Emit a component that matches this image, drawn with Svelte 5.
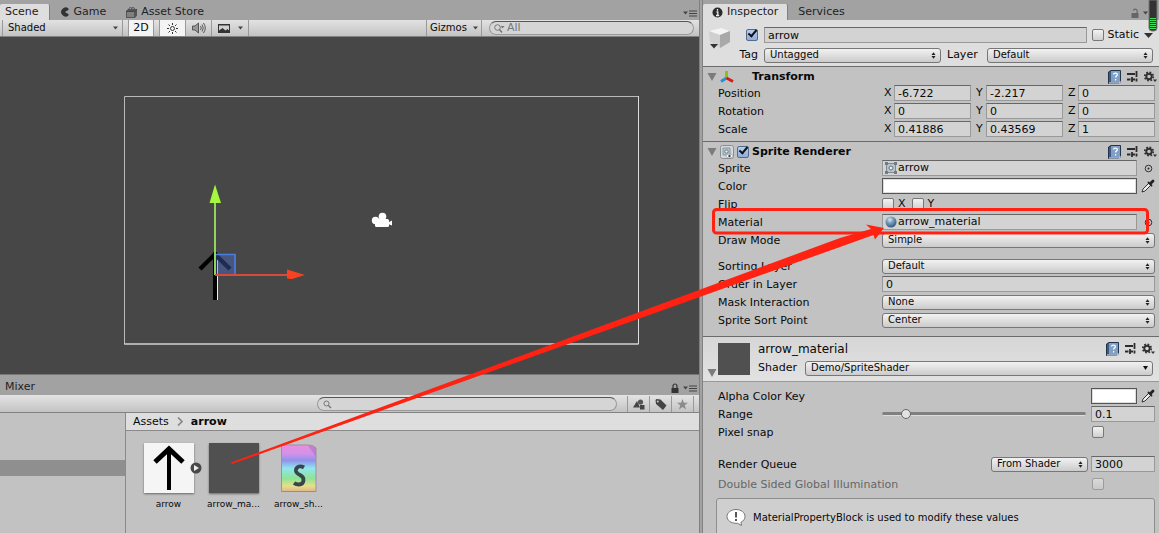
<script>
  const axes = ['X', 'Y', 'Z'];

  let transform = $state([
    { name: 'Position', values: ['-6.722', '-2.217', '0'] },
    { name: 'Rotation', values: ['0', '0', '0'] },
    { name: 'Scale', values: ['0.41886', '0.43569', '1'] },
  ]);

  let objectName = $state('arrow');
  let order = $state('0');
  let range = $state(0.1);
  let queue = $state('3000');
</script>

{#snippet caret()}
  <svg class="caret" width="5" height="4" viewBox="0 0 5 4"><path d="M0 .5h5L2.5 3.5z" fill="#444" /></svg>
{/snippet}

{#snippet paneMenu()}
  <svg width="14" height="7" viewBox="0 0 14 7"><path d="M0 1.500h5L2.500 4.500z" fill="#444" /><path d="M6 1h8M6 3.500h8M6 6h8" stroke="#444" stroke-width="1.200" /></svg>
{/snippet}

{#snippet lock(open)}
  <svg width="8" height="10" viewBox="0 0 8 10">
    <path d={open ? 'M2.500 2.800a1.800 1.800 0 0 1 3.600 .2v2' : 'M2 5V3a2 2 0 0 1 4 0v2'} fill="none" stroke={open ? '#666' : '#333'} stroke-width="1.200" />
    <path d="M.500 5h7v5h-7z" fill={open ? '#666' : '#333'} />
  </svg>
{/snippet}

{#snippet popup(id, value, label)}
  <span class="popup">
    <select {id} aria-label={label}><option>{value}</option></select>
    {#if id === 'shader'}
      <svg width="5" height="4" viewBox="0 0 5 4"><path d="M0 0h5L2.500 4z" fill="#111" /></svg>
    {:else}
      <svg width="5" height="7" viewBox="0 0 5 7"><path d="M.500 3L2.500 .300 4.500 3zM.500 4L2.500 6.700 4.500 4z" fill="#222" /></svg>
    {/if}
  </span>
{/snippet}

{#snippet fold()}
  <svg class="fold" width="10" height="8" viewBox="0 0 10 8"><path d="M.500 0h9L5 8z" fill="#7c7c7c" /></svg>
{/snippet}

{#snippet tools()}
  <span class="tools">
    <button aria-label="Help">
      <svg width="13" height="14" viewBox="0 0 13 14">
        <path d="M.500 2L3 .500h9.500v11.500L10 13.500H.500z" fill="#40597c" stroke="#22334c" />
        <path d="M3 1h9v11H3z" fill="#7f9fc6" />
        <path d="M1 13h9.500l2-1.500" fill="none" stroke="#f0f3f7" />
        <path d="M5.500 4.500c.2-2 4-1.800 3.800.2 0 1.200-1.700 1.200-1.700 2.800M7.600 9v1.500" fill="none" stroke="#fff" stroke-width="1.300" />
      </svg>
    </button>
    <button aria-label="Presets">
      <svg width="11" height="12" viewBox="0 0 11 12"><path d="M0 3h6.500M9.500 0v6M6.500 3h1.500M0 8.500h3.500M5 6v5M5 8.500h3M9.500 7.500v3" fill="none" stroke="#2c2c2c" stroke-width="1.800" /></svg>
    </button>
    <button aria-label="Settings">
      <svg width="13" height="12" viewBox="0 0 13 12">
        <circle cx="5" cy="5.500" r="4.200" fill="none" stroke="#303030" stroke-width="1.800" stroke-dasharray="1.700 1.600" />
        <circle cx="5" cy="5.500" r="2.700" fill="none" stroke="#303030" stroke-width="1.900" />
        <path d="M9 8.500h4l-2 2.500z" fill="#303030" />
      </svg>
    </button>
  </span>
{/snippet}

{#snippet picker()}
  <button class="side" aria-label="Select object">
    <svg width="9" height="9" viewBox="0 0 9 9"><circle cx="4.500" cy="4.500" r="3.300" fill="none" stroke="#333" /><circle cx="4.500" cy="4.500" r="1" fill="#222" /></svg>
  </button>
{/snippet}

{#snippet dropper()}
  <button class="side" aria-label="Pick color">
    <svg width="14" height="14" viewBox="0 0 14 14">
      <path d="M1 13l1-3 6-6 2 2-6 6z" fill="#eee" stroke="#333" />
      <path d="M7.500 3.500l3 3" stroke="#222" stroke-width="1.800" stroke-linecap="round" />
      <path d="M10 4l2-2" stroke="#222" stroke-width="2.800" stroke-linecap="round" />
    </svg>
  </button>
{/snippet}

<div class="editor">
  <main class="left">
    <section class="scene">
      <nav class="tabs">
        <button class="tab active first">Scene</button>
        <button class="tab">
          <svg width="10" height="10" viewBox="0 0 10 10"><path d="M8.500 1.500A4.500 4.500 0 1 0 8.500 8.500V7L5.500 5.500V4.500L8.500 3z" fill="#333" /></svg>
          Game
        </button>
        <button class="tab">
          <svg width="11" height="11" viewBox="0 0 11 11">
            <path d="M0 4l2-2h9v6.500L9 11H0z" fill="#555" />
            <path d="M1 5h7v5H1z" fill="#808080" />
            <path d="M3 4V2q0-1.500 1.500-1.500T6 2v2M5.500 1.500Q6 .500 7 .500 8.500.500 8.500 2v1.500" fill="none" stroke="#555" />
            <path d="M0 4.500h9L11 2" fill="none" stroke="#444" />
          </svg>
          Asset Store
        </button>
        <span class="pane-icons">{@render paneMenu()}</span>
      </nav>
      <div class="toolbar">
        <button class="tool mode">Shaded {@render caret()}</button>
        <button class="tool on flat">2D</button>
        <div class="group">
          <button class="tool on" aria-label="Lighting">
            <svg width="11" height="11" viewBox="0 0 11 11"><circle cx="5.500" cy="5.500" r="2" fill="none" stroke="#333" /><path d="M5.500 0v2M5.500 9v2M0 5.500h2M9 5.500h2M1.500 1.500l1.500 1.500M8 8l1.500 1.500M9.500 1.500L8 3M3 8L1.500 9.500" stroke="#333" /></svg>
          </button>
          <button class="tool" aria-label="Audio">
            <svg width="14" height="12" viewBox="0 0 14 12"><path d="M.500 4H3l3.500-3v10L3 8H.500z" fill="#999" stroke="#555" /><path d="M8.500 4q1.500 2 0 4M10 2.500q2.500 3.500 0 7M11.500 1q3.500 5 0 10" fill="none" stroke="#555" /></svg>
          </button>
          <button class="tool effects" aria-label="Effects">
            <svg width="12" height="9" viewBox="0 0 12 9"><path d="M0 0h12v9H0z" fill="#333" /><path d="M1 1.500h10V6.500L9.500 5 7.500 6.500 4.500 4 1 6.500z" fill="#d0d0d0" /></svg>
            {@render caret()}
          </button>
        </div>
        <button class="tool gizmos">Gizmos {@render caret()}</button>
        <label class="search">
          <svg width="11" height="9" viewBox="0 0 11 9"><circle cx="3.500" cy="3.500" r="2.800" fill="none" stroke="#777" /><path d="M5.500 5.500L8 8.500" stroke="#777" stroke-width="1.500" /><path d="M6.500 2h4L8.500 4.500z" fill="#777" /></svg>
          <input type="text" placeholder="All" aria-label="Search scene" />
        </label>
      </div>
      <div class="view">
        <svg width="698" height="337" viewBox="0 37 698 337">
          <path d="M124.500 96.500h514v247.500h-514z" fill="none" stroke="#b9b9b9" />
          <path d="M638.500 96v248H124" fill="none" stroke="#dedede" />
          <path d="M217.500 257v43M203 268l11-10M216 255l10 9" stroke="#eee" />
          <path d="M215 252v48" stroke="#000" stroke-width="4" />
          <path d="M200 269l15-14.500L230 269" fill="none" stroke="#000" stroke-width="4.500" />
          <path d="M215.500 254.500h19.500V275h-19.500z" fill="#4a6fd0" fill-opacity=".4" />
          <path d="M216 254.500h19V274" fill="none" stroke="#4a7de2" stroke-width="1.700" />
          <path d="M215 202v73" stroke="#93d45c" stroke-width="2" />
          <path d="M215 184.500L209.500 203h11.500z" fill="#a5f63f" />
          <path d="M215 275h72" stroke="#d84a3c" stroke-width="2" />
          <path d="M305 275l-18-5.500v11z" fill="#f84222" />
          <path d="M287 280.500v-2l6 .7z" fill="#8f2a1c" />
          <g fill="#fff"><circle cx="375.500" cy="220.500" r="3.700" /><circle cx="382.500" cy="216.500" r="3.800" /><rect x="375" y="219" width="14" height="8" rx="1.500" /><path d="M388 222.500l4-2v5l-4-1.500z" /></g>
        </svg>
      </div>
    </section>

    <section class="project">
      <nav class="tabs low">
        <button class="tab first">Mixer</button>
        <span class="pane-icons">{@render lock(false)}{@render paneMenu()}</span>
      </nav>
      <div class="toolbar assets-bar">
        <label class="search">
          <svg width="9" height="9" viewBox="0 0 9 9"><circle cx="3.500" cy="3.500" r="2.500" fill="none" stroke="#777" /><path d="M5.500 5.500l2.500 2.500" stroke="#777" stroke-width="1.500" /></svg>
          <input type="text" aria-label="Search assets" />
        </label>
        <div class="filters">
          <button class="tool" aria-label="Search by type">
            <svg width="12" height="11" viewBox="0 0 12 11"><path d="M0 8.500L4 2l3 6.500z" fill="#444" /><circle cx="7.500" cy="3" r="2.600" fill="#555" /><path d="M7 6h4.500v4.500H7z" fill="#444" /></svg>
          </button>
          <button class="tool" aria-label="Search by label">
            <svg width="12" height="11" viewBox="0 0 12 11"><path d="M.500 1L1.500 0l4 .5 6 6-3.500 4.500-7-6z" fill="#444" /><circle cx="2.800" cy="2.500" r="1" fill="#ccc" /></svg>
          </button>
          <button class="tool" aria-label="Save search">
            <svg width="11" height="11" viewBox="0 0 11 11"><path d="M5.500 0l1.400 3.800H11L7.800 6.300 9 10.500 5.500 8 2 10.500l1.200-4.200L0 3.800h4.100z" fill="#8b8b8b" /></svg>
          </button>
        </div>
      </div>
      <div class="browser">
        <aside class="tree"><div class="picked"></div></aside>
        <div class="folder">
          <div class="crumbs">
            <a href="#assets">Assets</a>
            <svg width="6" height="9" viewBox="0 0 6 9"><path d="M1 .500l4 4-4 4" fill="none" stroke="#888" stroke-width="1.700" /></svg>
            <b>arrow</b>
          </div>
          <ul class="files">
            <li>
              <span class="thumb sprite">
                <svg width="50" height="50" viewBox="0 0 50 50"><path d="M25 5v42" stroke="#000" stroke-width="4" /><path d="M11 19L25 6l14 13" fill="none" stroke="#000" stroke-width="5" /></svg>
                <button class="expand" aria-label="Expand arrow">
                  <svg width="12" height="12" viewBox="0 0 12 12"><circle cx="6" cy="6" r="5.500" fill="#484848" /><path d="M4 3l5 3-5 3z" fill="#eee" /></svg>
                </button>
              </span>
              arrow
            </li>
            <li><span class="thumb material"></span>arrow_ma...</li>
            <li>
              <span class="thumb">
                <svg width="36" height="50" viewBox="0 0 36 50">
                  <defs>
                    <linearGradient id="rainbow" x1="0" y1="0" x2="0" y2="1">
                      <stop offset="0" stop-color="#e98fe0" />
                      <stop offset=".2" stop-color="#cf92ea" />
                      <stop offset=".33" stop-color="#8f92ea" />
                      <stop offset=".5" stop-color="#8fe6f0" />
                      <stop offset=".72" stop-color="#8fe493" />
                      <stop offset=".88" stop-color="#e5e08c" />
                      <stop offset="1" stop-color="#e0b58a" />
                    </linearGradient>
                  </defs>
                  <path d="M.500 2H27q6 0 8 3v43.500H.500z" fill="url(#rainbow)" stroke="#a58d9d" />
                  <path d="M27 2.500q6 0 8 3V14z" fill="#a878b8" opacity=".6" />
                  <path d="M1 48.500h34" stroke="#a58a6b" />
                  <path d="M23 24.500q-2.500-1.500-5-1-3.500 1-3 4.500.5 2.500 4 4 4 2 3.500 5.500-.5 4-4.500 4-3 0-5-1.500" fill="none" stroke="#38464c" stroke-width="3.800" />
                </svg>
              </span>
              arrow_sh...
            </li>
          </ul>
        </div>
      </div>
    </section>
  </main>

  <aside class="inspector">
    <nav class="tabs">
      <button class="tab active info">
        <svg width="11" height="11" viewBox="0 0 11 11"><circle cx="5.500" cy="5.500" r="5" fill="#2b2b2b" /><path d="M5.500 2v1.800M4.500 5h1.300v3.500M4 8.500h3.200" fill="none" stroke="#eee" stroke-width="1.300" /></svg>
        Inspector
      </button>
      <button class="tab">Services</button>
      <span class="pane-icons">{@render lock(true)}{@render paneMenu()}</span>
    </nav>

    <header class="object">
      <svg class="cube" width="24" height="24" viewBox="0 0 24 24">
        <path d="M1 4L13 1l9 3v11l-10 6L2 15z" fill="#d0d0d0" />
        <path d="M1 4L13 1l9 3-10 4z" fill="#f4f4f4" />
        <path d="M12 8l10-4v11l-10 6z" fill="#a9a9a9" />
        <path d="M2 17h8l-4 4.500z" fill="#333" />
      </svg>
      <div class="lines">
        <div class="line">
          <span class="lead"><input type="checkbox" checked aria-label="Active" /></span>
          <input class="field" type="text" bind:value={objectName} aria-label="Name" />
          <label class="static"><input type="checkbox" /> Static</label>
          <svg width="9" height="5" viewBox="0 0 9 5"><path d="M0 0h9L4.500 5z" fill="#333" /></svg>
        </div>
        <div class="line tagline">
          <label class="lead" for="tag">Tag</label>
          {@render popup('tag', 'Untagged')}
          <label class="layer" for="layer">Layer</label>
          {@render popup('layer', 'Default')}
        </div>
      </div>
    </header>

    <section class="component">
      <div class="head">
        {@render fold()}
        <svg width="14" height="14" viewBox="0 0 14 14"><path d="M6.500 8V1" stroke="#86c316" stroke-width="3" /><path d="M6.500 8L1 11.500" stroke="#2b8fd0" stroke-width="3" /><path d="M6.500 8l6.500 3.500" stroke="#d41c1c" stroke-width="3" /></svg>
        <span class="slot"></span>
        <h2>Transform</h2>
        {@render tools()}
      </div>
      {#each transform as prop}
        <div class="row">
          <span>{prop.name}</span>
          <div class="vector">
            {#each axes as axis, i}
              <label>{axis}<input class="field" type="text" bind:value={prop.values[i]} aria-label="{prop.name} {axis}" /></label>
            {/each}
          </div>
        </div>
      {/each}
    </section>

    <section class="component renderer">
      <div class="head">
        {@render fold()}
        <svg width="14" height="14" viewBox="0 0 14 14">
          <rect x=".500" y=".500" width="13" height="13" rx="2" fill="#d5d9dc" stroke="#8a8f93" />
          <path d="M3 3h7v7H3z" fill="#b9c6ce" stroke="#8796a1" />
          <circle cx="6.500" cy="6.500" r="1.700" fill="#e4eaee" stroke="#667c8c" />
          <ellipse cx="9.500" cy="11" rx="3.500" ry="2" fill="#fff" stroke="#888" stroke-width=".6" /><circle cx="9.500" cy="11" r="1.200" fill="#345" />
        </svg>
        <input type="checkbox" checked aria-label="Sprite Renderer enabled" />
        <h2>Sprite Renderer</h2>
        {@render tools()}
      </div>
      <div class="row">
        <span>Sprite</span>
        <div class="value">
          <button class="field object-ref">
            <svg width="12" height="12" viewBox="0 0 12 12"><path d="M1.500 1.500h9v9h-9z" fill="#b8c3ca" stroke="#7d8a93" /><path d="M0 0h3v3H0zM9 0h3v3H9zM0 9h3v3H0zM9 9h3v3H9z" fill="#6d7c86" /><circle cx="6" cy="6" r="2" fill="#e5ebef" stroke="#647480" /></svg>
            arrow
          </button>
          {@render picker()}
        </div>
      </div>
      <div class="row">
        <label for="tint">Color</label>
        <div class="value"><input id="tint" type="color" value="#ffffff" />{@render dropper()}</div>
      </div>
      <div class="row">
        <span>Flip</span>
        <div class="flips">
          <label><input type="checkbox" />X</label>
          <label><input type="checkbox" />Y</label>
        </div>
      </div>
      <div class="row">
        <span>Material</span>
        <div class="value">
          <button class="field object-ref">
            <svg width="12" height="12" viewBox="0 0 12 12">
              <defs><radialGradient id="ball" cx=".4" cy=".3" r=".7"><stop offset="0" stop-color="#dcebf5" /><stop offset=".4" stop-color="#7da3c2" /><stop offset="1" stop-color="#35587a" /></radialGradient></defs>
              <circle cx="6" cy="6" r="5.500" fill="url(#ball)" />
            </svg>
            arrow_material
          </button>
          {@render picker()}
        </div>
      </div>
      <div class="row"><label for="draw-mode">Draw Mode</label>{@render popup('draw-mode', 'Simple')}</div>
      <div class="row spaced"><label for="sorting">Sorting Layer</label>{@render popup('sorting', 'Default')}</div>
      <div class="row"><label for="order">Order in Layer</label><input id="order" class="field" type="text" bind:value={order} /></div>
      <div class="row"><label for="mask">Mask Interaction</label>{@render popup('mask', 'None')}</div>
      <div class="row"><label for="sort-point">Sprite Sort Point</label>{@render popup('sort-point', 'Center')}</div>
    </section>

    <section class="asset">
      <header class="asset-head">
        {@render fold()}
        <span class="preview"></span>
        <div class="asset-lines">
          <div class="asset-title"><h3>arrow_material</h3>{@render tools()}</div>
          <div class="asset-shader"><label for="shader">Shader</label>{@render popup('shader', 'Demo/SpriteShader')}</div>
        </div>
      </header>
      <div class="row"><label for="alpha">Alpha Color Key</label><div class="value end"><input id="alpha" type="color" value="#ffffff" />{@render dropper()}</div></div>
      <div class="row">
        <label for="range">Range</label>
        <div class="slider">
          <input id="range" type="range" min="0" max="1" step="0.01" bind:value={range} />
          <input class="field" type="text" bind:value={range} aria-label="Range value" />
        </div>
      </div>
      <div class="row"><label for="snap">Pixel snap</label><div class="toggle"><input id="snap" type="checkbox" /></div></div>
      <div class="row queue">
        <label for="queue-from">Render Queue</label>
        <div class="queue-value">
          {@render popup('queue-from', 'From Shader')}
          <input class="field" type="text" bind:value={queue} aria-label="Render queue value" />
        </div>
      </div>
      <div class="row disabled"><label for="double">Double Sided Global Illumination</label><div class="toggle"><input id="double" type="checkbox" disabled /></div></div>
      <div class="help">
        <svg width="20" height="20" viewBox="0 0 20 20"><path d="M10 1.500c5 0 9 3 9 7 0 2.500-1.500 4.500-4 5.700l.5 3.300-4-2.200H10c-5 0-9-3-9-6.800s4-7 9-7z" fill="#fff" stroke="#777" /><path d="M10 4v5.500M10 11v2" stroke="#555" stroke-width="2" /></svg>
        MaterialPropertyBlock is used to modify these values
      </div>
    </section>
  </aside>

  <!-- callout from the asset to the material slot -->
  <svg class="callout" width="1159" height="533" viewBox="0 0 1159 533">
    <rect x="713.500" y="209.500" width="434" height="23.500" rx="3" fill="none" stroke="#ff2212" stroke-width="3" />
    <path d="M231 462.500L840 238 871 229 866 224.500 884 228 875 239.500 873.500 235 840 247 232 464z" fill="#ff2212" />
    <path d="M1149 0h8v28q0 3-3 3h-2q-3 0-3-3z" fill="#333" stroke="#777" />
    <path d="M1150 18.500h6M1150 20.500h6M1150 22.500h6M1150 24.500h6M1150 26.500h6M1150 28.500h6" stroke="#3ee05c" />
  </svg>
</div>

<style>
  :global(body) {
    margin: 0;
    font-family: "DejaVu Sans", Verdana, sans-serif;
    font-size: 11px;
    line-height: 14px;
    color: #090909;
    background: #a2a2a2;
  }

  .editor {
    position: relative;
    display: grid;
    grid-template-columns: minmax(0, 1fr) 457px;
    column-gap: 2px;
    height: 100vh;
    overflow: hidden;
    background: #a2a2a2;
  }

  button,
  input,
  select {
    box-sizing: border-box;
    margin: 0;
    padding: 0;
    border: 0;
    border-radius: 0;
    background: none;
    font: inherit;
    color: inherit;
  }

  svg {
    display: block;
    flex: none;
  }

  h2,
  h3 {
    margin: 0;
    font-size: 11px;
  }

  /* panes */
  .left {
    display: flex;
    flex-direction: column;
    min-width: 0;
    border-right: 1px solid #808080;
  }

  .scene {
    display: flex;
    flex-direction: column;
    flex: 1;
    min-height: 0;
  }

  .inspector {
    min-width: 0;
    overflow: hidden;
    border-left: 1px solid #828282;
    background: #c2c2c2;
  }

  .tabs {
    display: flex;
    align-items: flex-end;
    box-sizing: border-box;
    height: 20px;
    background: #a2a2a2;
  }

  .tab {
    display: flex;
    align-items: center;
    gap: 4px;
    height: 16px;
    padding: 0 10px;
    color: #222;
  }

  .tab.first {
    padding-left: 5px;
  }

  .tab.info {
    padding: 0 9px;
  }

  .tab.active {
    border: 1px solid #808080;
    border-width: 0 1px 0 0;
    border-radius: 2px 2px 0 0;
    background: #dedede;
  }

  .pane-icons {
    display: flex;
    align-items: center;
    gap: 4px;
    margin-left: auto;
    height: 14px;
    padding-right: 2px;
  }

  .toolbar {
    display: flex;
    box-sizing: border-box;
    height: 17px;
    padding: 0 5px 0 2px;
    border-bottom: 1px solid #828282;
    background: linear-gradient(#e2e2e2, #c3c3c3);
  }

  .tool {
    display: flex;
    align-items: center;
    justify-content: center;
    height: 16px;
    border-right: 1px solid #999;
    font-size: 10px;
  }

  .tool.on {
    background: #f4f4f4;
  }

  .mode {
    justify-content: space-between;
    width: 121px;
    padding: 0 4px 0 5px;
    border-left: 1px solid #999;
  }

  .flat {
    width: 26px;
    margin: 0 5px;
    border-left: 1px solid #999;
    font-size: 11px;
  }

  .group {
    display: flex;
    border-left: 1px solid #999;
  }

  .group .tool {
    width: 26px;
  }

  .group .effects {
    gap: 8px;
    width: 37px;
  }

  .gizmos {
    gap: 6px;
    width: 56px;
    margin-left: auto;
    border-left: 1px solid #999;
  }

  .search {
    display: flex;
    align-items: center;
    gap: 2px;
    box-sizing: border-box;
    width: 205px;
    height: 14px;
    margin: 1px 0 0 7px;
    padding: 0 4px;
    border: 1px solid #999;
    border-top-color: #555;
    border-radius: 7px;
    background: #d5d5d5;
  }

  .search input {
    flex: 1;
    min-width: 0;
    height: 12px;
    outline: 0;
  }

  .search input::placeholder {
    color: #777;
    opacity: 1;
  }

  .view {
    flex: 1;
    overflow: hidden;
    background: #474747;
  }

  /* project browser */
  .project {
    border-top: 1px solid #777;
  }

  .tabs.low {
    height: 21px;
    border-bottom: 1px solid #e2e2e2;
  }

  .assets-bar .search {
    width: 300px;
    margin-left: auto;
    padding-left: 5px;
  }

  .filters {
    display: flex;
    margin-left: 10px;
    border-left: 1px solid #999;
  }

  .filters .tool {
    width: 22px;
  }

  .browser {
    display: flex;
    height: 120px;
    background: #c2c2c2;
  }

  .tree {
    width: 126px;
    padding-top: 47px;
    box-sizing: border-box;
    border-right: 1px solid #8a8a8a;
  }

  .picked {
    height: 16px;
    background: #8f8f8f;
  }

  .folder {
    flex: 1;
  }

  .crumbs {
    display: flex;
    align-items: center;
    gap: 8px;
    height: 17px;
    padding-left: 7px;
    border-bottom: 1px solid #8a8a8a;
    background: #dedede;
  }

  .crumbs a {
    color: inherit;
    text-decoration: none;
  }

  .files {
    display: flex;
    margin: 0;
    padding: 12px 10px;
    list-style: none;
  }

  .files li {
    display: flex;
    flex-direction: column;
    align-items: center;
    gap: 4px;
    width: 65px;
    font-size: 9px;
  }

  .thumb {
    position: relative;
    height: 50px;
  }

  .sprite,
  .material {
    width: 50px;
    background: #f5f5f5;
    box-shadow: 0 1px 2px #666;
  }

  .material {
    background: #505050;
  }

  .expand {
    position: absolute;
    right: -8px;
    top: 19px;
  }

  /* shared controls */
  .field {
    height: 16px;
    min-width: 0;
    padding: 0 3px;
    border: 1px solid #999;
    border-top-color: #666;
    background: #d3d3d3;
    text-align: left;
  }

  .popup {
    display: grid;
    align-items: center;
    flex: 1 1 0;
    min-width: 0;
  }

  .popup select,
  .popup svg {
    grid-area: 1 / 1;
  }

  .popup select {
    width: 100%;
    height: 15px;
    padding: 0 12px 0 5px;
    appearance: none;
    border: 1px solid #777;
    border-radius: 3px;
    background: linear-gradient(#f2f2f2, #cbcbcb);
    font-size: 10px;
    line-height: 12px;
  }

  .popup svg {
    justify-self: end;
    margin-right: 5px;
    pointer-events: none;
  }

  input[type="checkbox"] {
    display: grid;
    flex: none;
    width: 12px;
    height: 12px;
    appearance: none;
    border: 1px solid #777;
    border-radius: 2px;
    background: linear-gradient(#f2f2f2, #d0d0d0);
  }

  input[type="checkbox"]:checked {
    border-color: #556b8c;
    background: linear-gradient(#b5cdf0, #8daddb);
  }

  input[type="checkbox"]:checked::after {
    content: "";
    width: 5px;
    height: 9px;
    margin: -2px 0 0 3px;
    border: solid #111;
    border-width: 0 2px 2px 0;
    box-sizing: border-box;
    transform: rotate(40deg);
  }

  input[type="color"] {
    flex: 1;
    height: 16px;
    min-width: 0;
    appearance: none;
    border: 1px solid #555;
  }

  input[type="color"]::-webkit-color-swatch-wrapper {
    padding: 0;
  }

  input[type="color"]::-webkit-color-swatch {
    border: 1px solid #ddd;
  }

  input[type="range"] {
    flex: 1;
    min-width: 0;
    height: 12px;
    appearance: none;
  }

  input[type="range"]::-webkit-slider-runnable-track {
    height: 4px;
    border-bottom: 1px solid #ddd;
    border-radius: 2px;
    box-sizing: border-box;
    background: #808080;
  }

  input[type="range"]::-webkit-slider-thumb {
    width: 10px;
    height: 10px;
    margin-top: -3px;
    box-sizing: border-box;
    appearance: none;
    border: 1px solid #666;
    border-radius: 50%;
    background: #e2e2e2;
  }

  /* inspector */
  .object {
    display: flex;
    gap: 6px;
    height: 46px;
    box-sizing: border-box;
    padding: 7px 6px 0 5px;
    background: #dedede;
  }

  .lines {
    flex: 1;
    min-width: 0;
  }

  .line {
    display: flex;
    align-items: center;
    height: 16px;
  }

  .line > .field {
    flex: 1;
  }

  .lead {
    display: flex;
    justify-content: flex-end;
    flex: none;
    width: 20px;
    padding-right: 6px;
  }

  .static {
    display: flex;
    align-items: center;
    gap: 4px;
    margin: 0 5px;
  }

  .tagline {
    display: grid;
    grid-template-columns: auto 177fr 46px 166fr;
    height: 24px;
  }

  .layer {
    padding-left: 6px;
  }

  .component,
  .asset {
    border-top: 1px solid #6b6b6b;
  }

  .component {
    padding-bottom: 3px;
  }

  .renderer {
    padding-bottom: 7px;
  }

  .head {
    display: flex;
    align-items: center;
    gap: 3px;
    height: 17px;
    box-sizing: border-box;
    padding: 2px 2px 0 4px;
  }

  .slot {
    width: 12px;
  }

  .tools {
    display: flex;
    align-items: center;
    gap: 6px;
    margin-left: auto;
  }

  .row {
    display: grid;
    grid-template-columns: 164px minmax(0, 1fr);
    align-items: center;
    height: 18px;
    padding: 0 4px 0 15px;
    white-space: nowrap;
  }

  .row > span:first-child,
  .row > label {
    padding-top: 2px;
  }

  .spaced {
    margin-top: 8px;
  }

  .vector {
    display: grid;
    grid-template-columns: repeat(3, 1fr);
    gap: 3px;
  }

  .vector label {
    display: grid;
    grid-template-columns: 10px 1fr;
    align-items: center;
    padding-left: 2px;
  }

  .value {
    display: flex;
    align-items: center;
  }

  .value > .field {
    flex: 1;
  }

  .value.end input {
    flex: 0 1 46px;
    margin-left: auto;
  }

  .object-ref {
    display: flex;
    align-items: center;
    gap: 1px;
    padding: 0 2px;
  }

  .side {
    display: flex;
    justify-content: center;
    width: 18px;
  }

  .side svg {
    margin-left: 4px;
  }

  .flips {
    display: flex;
    gap: 6px;
  }

  .flips label {
    display: flex;
    align-items: center;
    gap: 4px;
  }

  .asset-head {
    display: flex;
    align-items: flex-end;
    gap: 1px;
    height: 45px;
    box-sizing: border-box;
    padding: 0 6px 4px 4px;
    border-bottom: 1px solid #999;
    background: linear-gradient(#d6d6d6, #e2e2e2);
  }

  .asset-head + .row {
    margin-top: 5px;
  }

  .preview {
    flex: none;
    width: 32px;
    height: 32px;
    margin: 0 7px 2px 0;
    background: #505050;
  }

  .asset-lines {
    flex: 1;
  }

  .asset-title,
  .asset-shader {
    display: flex;
    align-items: center;
    gap: 8px;
    height: 18px;
  }

  .asset-title {
    height: 20px;
    margin-right: -2px;
  }

  .asset-title h3 {
    font-size: 12px;
    font-weight: normal;
  }

  .slider,
  .queue-value {
    display: grid;
    grid-template-columns: 1fr 64px;
    align-items: center;
    gap: 5px;
  }

  .toggle {
    display: flex;
    justify-content: flex-end;
    padding-right: 51px;
  }

  .queue {
    margin-top: 14px;
  }

  .queue-value {
    grid-template-columns: 97px 64px;
    justify-content: end;
    gap: 3px;
  }

  .disabled {
    margin-top: 2px;
    color: #666;
  }

  .disabled input {
    opacity: 0.5;
  }

  .help {
    display: flex;
    align-items: center;
    gap: 7px;
    height: 38px;
    margin: 5px 4px 0 13px;
    padding-left: 9px;
    border: 1px solid #8e8e8e;
    border-radius: 3px;
    background: #cfcfcf;
    font-size: 10px;
  }

  .callout {
    position: absolute;
    left: 0;
    top: 0;
    pointer-events: none;
  }
</style>
